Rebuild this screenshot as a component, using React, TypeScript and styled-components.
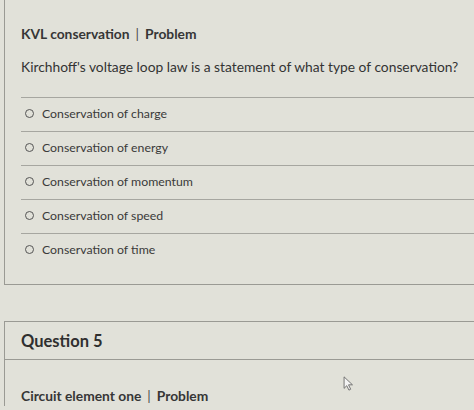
import React from "react";
import styled, { createGlobalStyle } from "styled-components";

const Global = createGlobalStyle`
  html, body {
    margin: 0;
    padding: 0;
    background: #e1e1d9;
    overflow: hidden;
  }
  body {
    font-family: Lato, "Open Sans", sans-serif;
    color: #333333;
  }
`;

const Page = styled.div`
  position: relative;
  width: 474px;
  height: 410px;
  padding-left: 4px;
  box-sizing: border-box;
  background: #e1e1d9;
`;

const Card = styled.section<{ $top?: boolean }>`
  border-left: 1px solid #9a9a94;
  border-top: ${(p) => (p.$top ? "1px solid #9a9a94" : "none")};
  border-bottom: ${(p) => (p.$top ? "none" : "1px solid #9a9a94")};
`;

const Body = styled.div`
  padding: 24px 0 16px 16px;
`;

const Title = styled.h2`
  margin: 0;
  font-size: 13.8px;
  line-height: 20px;
  font-weight: 700;
  color: #363636;
  white-space: nowrap;
`;

const Pipe = styled.span`
  font-weight: 400;
  color: #4a4a4a;
  margin: 0 6px;
`;

const QuestionText = styled.p`
  margin: 11px 0 18px;
  font-size: 13.8px;
  line-height: 24px;
  color: #333;
  white-space: nowrap;
`;

const Options = styled.ul`
  list-style: none;
  margin: 0;
  padding: 0;
  border-top: 1px solid #a6a6a0;
`;

const Option = styled.li<{ $last?: boolean }>`
  display: flex;
  align-items: center;
  gap: 8px;
  height: 34px;
  padding: 0 0 3px 4px;
  box-sizing: border-box;
  border-bottom: ${(p) => (p.$last ? "none" : "1px solid #a6a6a0")};
  font-size: 12.3px;
  color: #3a3a3a;
`;

const Radio = styled.span`
  width: 9px;
  height: 9px;
  border-radius: 50%;
  border: 1.2px solid #555;
  box-sizing: border-box;
  flex: none;
`;

const Gap = styled.div`
  height: 36px;
`;

const Header = styled.div`
  height: 37px;
  border-bottom: 1px solid #9a9a94;
  display: flex;
  align-items: center;
  padding-left: 16px;
`;

const HeaderText = styled.h3`
  margin: 0;
  font-size: 16.5px;
  font-weight: 700;
  color: #2f2f2f;
`;

const SubBody = styled.div`
  padding: 26px 0 0 16px;
`;

const Cursor = styled.svg`
  position: absolute;
  left: 343px;
  top: 376px;
`;

const options = [
  "Conservation of charge",
  "Conservation of energy",
  "Conservation of momentum",
  "Conservation of speed",
  "Conservation of time",
];

export default function App() {
  return (
    <Page>
      <Global />
      <Card>
        <Body>
          <Title>
            KVL conservation<Pipe>|</Pipe>Problem
          </Title>
          <QuestionText>
            Kirchhoff's voltage loop law is a statement of what type of conservation?
          </QuestionText>
          <Options>
            {options.map((o, i) => (
              <Option key={o} $last={i === options.length - 1}>
                <Radio />
                {o}
              </Option>
            ))}
          </Options>
        </Body>
      </Card>
      <Gap />
      <Card $top>
        <Header>
          <HeaderText>Question 5</HeaderText>
        </Header>
        <SubBody>
          <Title>
            Circuit element one<Pipe>|</Pipe>Problem
          </Title>
        </SubBody>
      </Card>
      <Cursor width="11" height="15" viewBox="0 0 12 17">
        <path
          d="M1 1 L1 14 L4 11 L6.5 16 L8.5 15 L6 10 L10.5 10 Z"
          fill="#f4f4f4"
          stroke="#666"
          strokeWidth="1"
          strokeLinejoin="round"
        />
      </Cursor>
    </Page>
  );
}
